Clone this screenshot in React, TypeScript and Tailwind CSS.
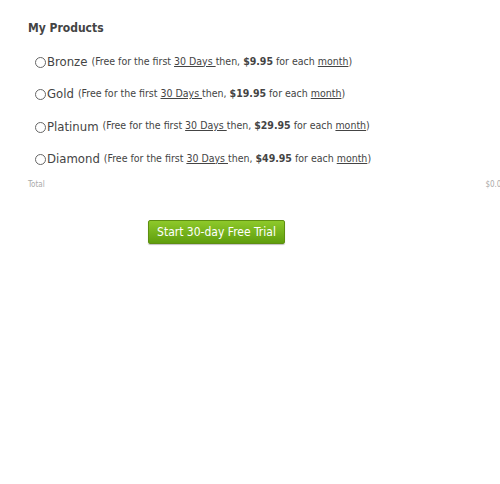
import { useState } from "react";

const products = [
  { name: "Bronze", price: "$9.95" },
  { name: "Gold", price: "$19.95" },
  { name: "Platinum", price: "$29.95" },
  { name: "Diamond", price: "$49.95" },
];

export default function App() {
  const [selected, setSelected] = useState<string | null>(null);

  return (
    <div className="w-[500px] h-[484px] overflow-hidden bg-white text-[#333] font-['DejaVu_Sans_Condensed','DejaVu_Sans',sans-serif]">
      <div className="w-[506px] pl-[28px] pt-[20px]">
        <h2 className="text-[12px] font-bold text-[#444] leading-4">My Products</h2>

        {/* Product options */}
        <div className="mt-[16px] pl-[7px] flex flex-col gap-[13.4px]">
          {products.map(p => (
            <label key={p.name} className="flex items-center h-[19px] cursor-pointer">
              <input
                type="radio"
                name="product"
                checked={selected === p.name}
                onChange={() => setSelected(p.name)}
                className="appearance-none w-[11px] h-[11px] rounded-full border border-[#666] mr-[1px] mt-[2px] checked:bg-[#555]"
              />
              <span className="text-[13px] text-[#444]">{p.name}</span>
              <span className="text-[10.5px] text-[#444] ml-[4px]">
                (Free for the first <span className="underline">30 Days </span>then, <b>{p.price}</b> for each{" "}
                <span className="underline">month</span>)
              </span>
            </label>
          ))}
        </div>

        <div className="mt-[11px] flex justify-between items-center text-[8px] text-[#aaa]">
          <span>Total</span>
          <span>$0.00</span>
        </div>

        <div className="mt-[28px] pl-[120px]">
          <button className="w-[137px] h-[24px] rounded-[2px] border border-[#5e8f10] bg-gradient-to-b from-[#8ec92a] to-[#5f9e0c] text-white text-[12px] leading-none shadow-[0_1px_1px_rgba(0,0,0,0.25)]">
            Start 30-day Free Trial
          </button>
        </div>
      </div>
    </div>
  );
}
